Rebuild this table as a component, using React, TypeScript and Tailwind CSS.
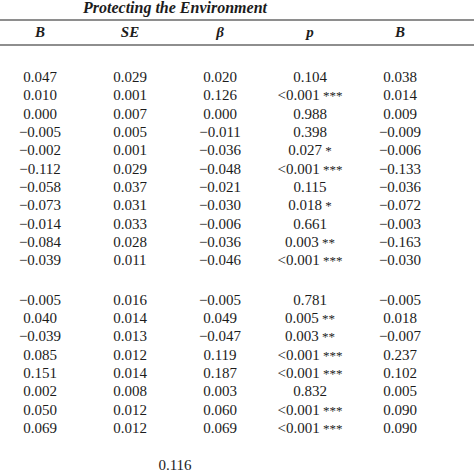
const groupA: string[][] = [
  ["0.047", "0.029", "0.020", "0.104", "0.038"],
  ["0.010", "0.001", "0.126", "<0.001 ***", "0.014"],
  ["0.000", "0.007", "0.000", "0.988", "0.009"],
  ["−0.005", "0.005", "−0.011", "0.398", "−0.009"],
  ["−0.002", "0.001", "−0.036", "0.027 *", "−0.006"],
  ["−0.112", "0.029", "−0.048", "<0.001 ***", "−0.133"],
  ["−0.058", "0.037", "−0.021", "0.115", "−0.036"],
  ["−0.073", "0.031", "−0.030", "0.018 *", "−0.072"],
  ["−0.014", "0.033", "−0.006", "0.661", "−0.003"],
  ["−0.084", "0.028", "−0.036", "0.003 **", "−0.163"],
  ["−0.039", "0.011", "−0.046", "<0.001 ***", "−0.030"],
];

const groupB: string[][] = [
  ["−0.005", "0.016", "−0.005", "0.781", "−0.005"],
  ["0.040", "0.014", "0.049", "0.005 **", "0.018"],
  ["−0.039", "0.013", "−0.047", "0.003 **", "−0.007"],
  ["0.085", "0.012", "0.119", "<0.001 ***", "0.237"],
  ["0.151", "0.014", "0.187", "<0.001 ***", "0.102"],
  ["0.002", "0.008", "0.003", "0.832", "0.005"],
  ["0.050", "0.012", "0.060", "<0.001 ***", "0.090"],
  ["0.069", "0.012", "0.069", "<0.001 ***", "0.090"],
];

const grid = "grid grid-cols-[repeat(5,90px)] ml-[-5px]";

function Cell({ value }: { value: string }) {
  // stars print a little smaller than the digits
  const [num, stars] = value.split(" ");
  return (
    <div className="text-center whitespace-nowrap">
      {num}
      {stars && <span className="text-[13px]"> {stars}</span>}
    </div>
  );
}

function Rows({ rows }: { rows: string[][] }) {
  return (
    <div>
      {rows.map((r, i) => (
        <div key={i} className={`${grid} h-[18.33px] leading-[18.33px]`}>
          {r.map((v, j) => (
            <Cell key={j} value={v} />
          ))}
        </div>
      ))}
    </div>
  );
}

export default function App() {
  return (
    <div
      className="w-[474px] h-[474px] overflow-hidden bg-white text-[#1c1c1c] text-[15px]"
      style={{ fontFamily: '"Liberation Serif", "Times New Roman", serif' }}
    >
      <div className={`${grid} h-[19px] items-end`}>
        <div className="col-span-4 text-center font-bold italic text-[16px] leading-[16px] mb-[5px]">
          Protecting the Environment
        </div>
      </div>
      <div className="h-[2px] bg-[#8e8e8e]" />
      <div className={`${grid} h-[23px] items-center font-bold italic`}>
        <div className="text-center">B</div>
        <div className="text-center">SE</div>
        <div className="text-center">β</div>
        <div className="text-center">p</div>
        <div className="text-center">B</div>
      </div>
      <div className="h-[2px] bg-[#8e8e8e]" />
      <div className="h-[22px]" />
      <Rows rows={groupA} />
      <div className="h-[21px]" />
      <Rows rows={groupB} />
      <div className="h-[19px]" />
      <div className={`${grid} h-[18.33px] leading-[18.33px]`}>
        <div className="col-span-4 text-center">0.116</div>
      </div>
    </div>
  );
}
